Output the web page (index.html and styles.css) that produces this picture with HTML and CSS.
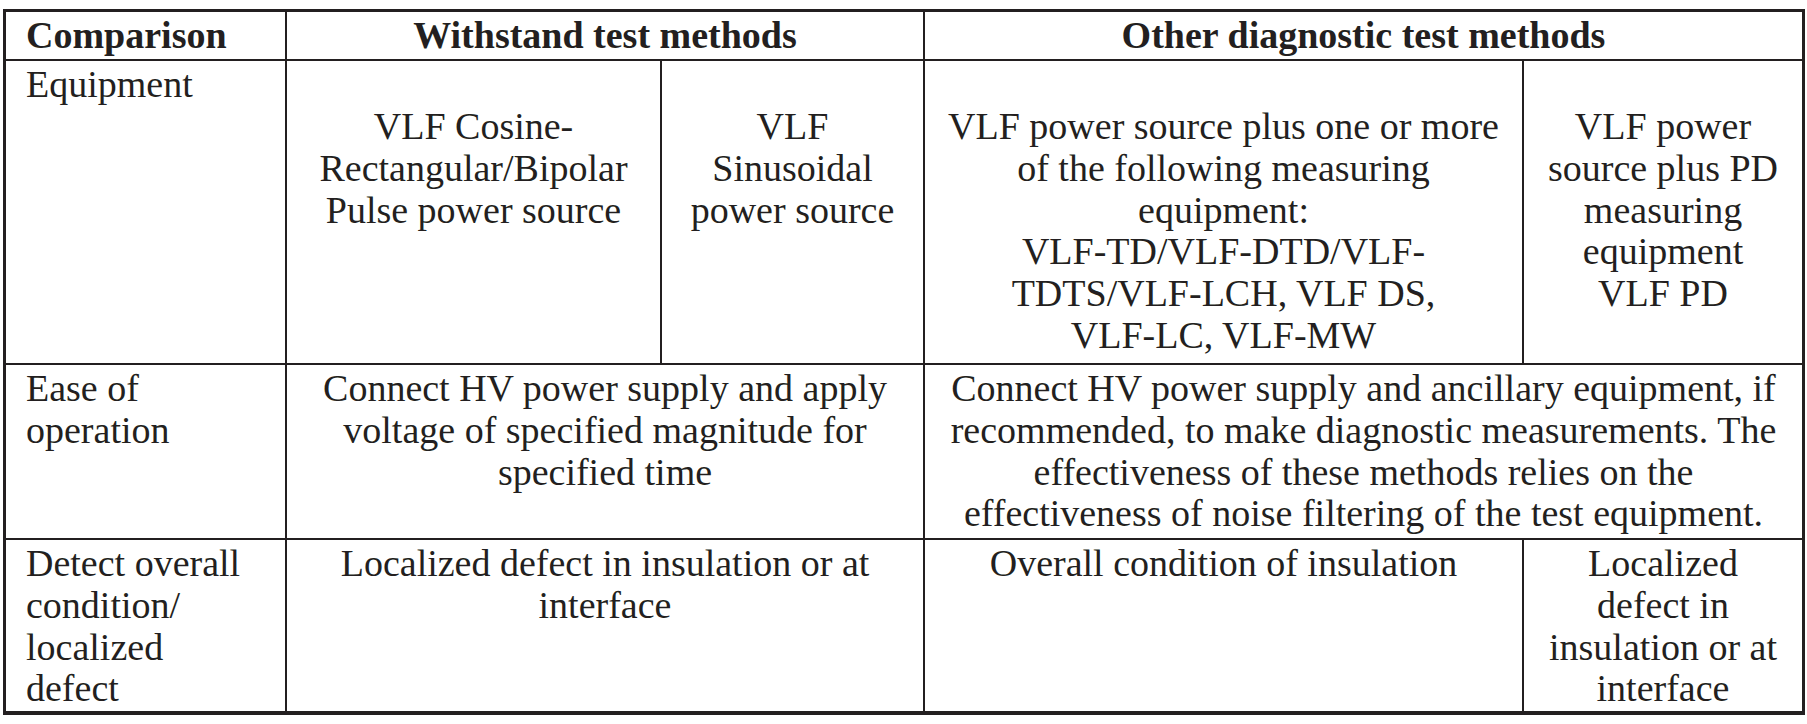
FILE: index.html
```html
<!DOCTYPE html>
<html lang="en">
<head>
<meta charset="utf-8">
<title>Comparison of VLF test methods</title>
<link rel="stylesheet" href="styles.css">
</head>
<body>
<div class="table">
  <div class="cell head label">Comparison</div>
  <div class="cell head span2">Withstand test methods</div>
  <div class="cell head span2">Other diagnostic test methods</div>

  <div class="cell label">Equipment</div>
  <div class="cell data equip">VLF Cosine-<br>Rectangular/Bipolar<br>Pulse power source</div>
  <div class="cell data equip">VLF<br>Sinusoidal<br>power source</div>
  <div class="cell data equip">VLF power source plus one or more<br>of the following measuring<br>equipment:<br>VLF-TD/VLF-DTD/VLF-<br>TDTS/VLF-LCH, VLF DS,<br>VLF-LC, VLF-MW</div>
  <div class="cell data equip">VLF power<br>source plus PD<br>measuring<br>equipment<br>VLF PD</div>

  <div class="cell label">Ease of<br>operation</div>
  <div class="cell data span2">Connect HV power supply and apply<br>voltage of specified magnitude for<br>specified time</div>
  <div class="cell data span2">Connect HV power supply and ancillary equipment, if<br>recommended, to make diagnostic measurements. The<br>effectiveness of these methods relies on the<br>effectiveness of noise filtering of the test equipment.</div>

  <div class="cell label">Detect overall<br>condition/<br>localized<br>defect</div>
  <div class="cell data span2">Localized defect in insulation or at<br>interface</div>
  <div class="cell data">Overall condition of insulation</div>
  <div class="cell data">Localized<br>defect in<br>insulation or at<br>interface</div>
</div>
</body>
</html>
```
FILE: styles.css
```css
html, body {
  margin: 0;
  background: #ffffff;
}

body {
  padding: 9px 0 0 3px;
  font-family: "Liberation Serif", "Times New Roman", serif;
  font-size: 38px;
  line-height: 1.1;
  color: #231f20;
}

.table {
  display: grid;
  grid-template-columns: 279px 373px 261px 597px 278px;
  grid-template-rows: 47px 302px 173px 171px;
  gap: 2px;
  padding: 3px 3px 4px 3px;
  width: max-content;
  background: #231f20;
}

.cell {
  background: #ffffff;
  white-space: nowrap;
  padding-top: 3px;
}

.span2 {
  grid-column: span 2;
}

.head {
  font-weight: bold;
  display: flex;
  align-items: center;
  justify-content: center;
  padding-top: 0;
}

.head.label {
  justify-content: flex-start;
}

.label {
  padding-left: 20px;
}

.data {
  text-align: center;
}

.equip {
  padding-top: 45px;
}
```
